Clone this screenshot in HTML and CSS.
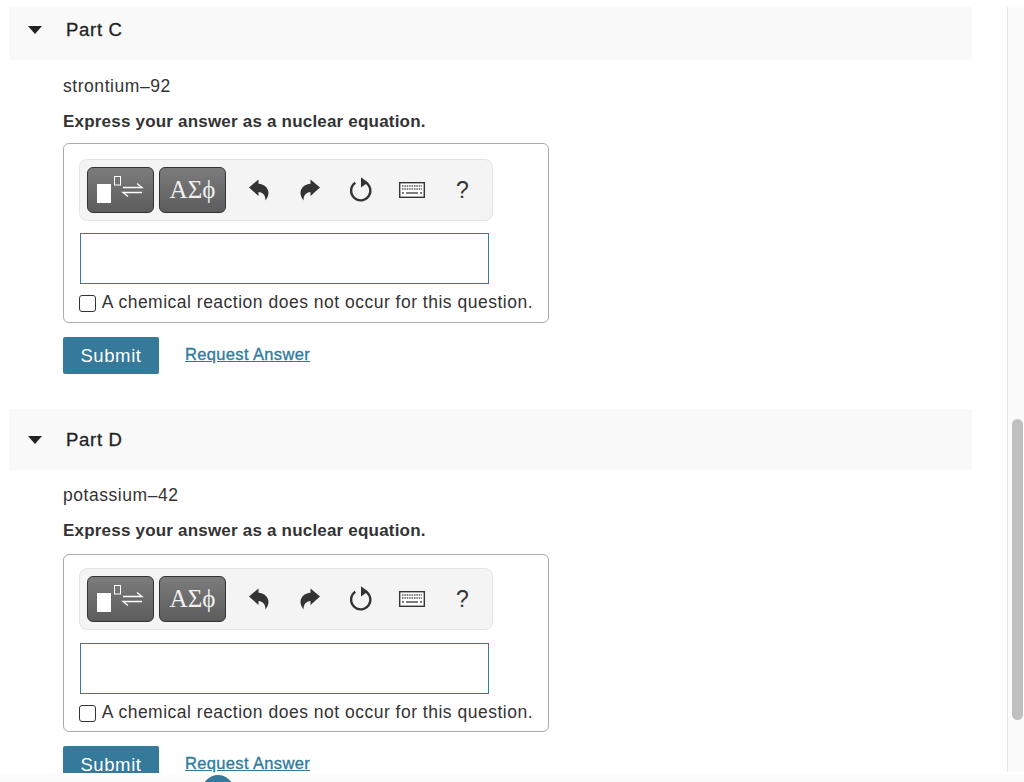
FILE: index.html
```html
<!DOCTYPE html>
<html lang="en">
<head>
<meta charset="utf-8">
<title>Nuclear equations</title>
<link rel="stylesheet" href="styles.css">
</head>
<body>
<div class="window">
  <main class="viewport">
    <div class="scroller">
      <section class="part">
        <header class="part-head"><span class="caret"></span><h2 class="part-title">Part C</h2></header>
        <div class="part-body">
          <p class="isotope">strontium&#8211;92</p>
          <p class="prompt">Express your answer as a nuclear equation.</p>
          <div class="answer">
            <div class="toolbar">
              <button class="tool tool-template" type="button" aria-label="Templates">
                <svg class="tool-svg" width="67" height="46" viewBox="0 0 67 46"><rect x="10" y="17" width="14" height="19" fill="#fff"/><rect x="27.500" y="9.500" width="6" height="8.500" fill="none" stroke="#fff"/><path d="M36 20.500h19l-5-4M55 25.500H36l5 4" fill="none" stroke="#fff" stroke-width="1.300"/></svg>
              </button>
              <button class="tool tool-greek" type="button">ΑΣϕ</button>
              <span class="icon-btn icon-first"><svg width="20" height="22" viewBox="0 0 20 22"><path d="M0 8.500 9.500 .5v4.300C15.500 5 19.500 9.500 19.500 14 19.500 16.500 18 19.500 16.500 21.500 16.500 16 14 13.500 9.500 13V17z" fill="#333"/></svg></span>
              <span class="icon-btn"><svg width="20" height="22" viewBox="0 0 20 22"><path d="M20 8.500 10.500 .5v4.300C4.500 5 .5 9.500 .5 14 .5 16.500 2 19.500 3.500 21.500 3.500 16 6 13.500 10.500 13V17z" fill="#333"/></svg></span>
              <span class="icon-btn"><svg width="24" height="26" viewBox="0 0 24 26"><path d="M13 4.200A9.600 9.600 0 1 1 6.300 5.800" fill="none" stroke="#333" stroke-width="2.400"/><path d="M12 .3 19 5.500 12 10.500z" fill="#333"/></svg></span>
              <span class="icon-btn"><svg width="26" height="16" viewBox="0 0 26 16"><rect x=".7" y=".7" width="24.600" height="14.600" fill="#fff" stroke="#333" stroke-width="1.400"/><path d="M3 4h20M3 7h20" stroke="#555" stroke-width="1.500" stroke-dasharray="1.500 .9"/><path d="M3 11h2M7 11h12M21 11h2" stroke="#555" stroke-width="1.500"/></svg></span>
              <span class="icon-btn help">?</span>
            </div>
            <div class="field"></div>
            <label class="no-reaction"><input class="check" type="checkbox">A chemical reaction does not occur for this question.</label>
          </div>
          <div class="actions"><button class="submit" type="button">Submit</button><a class="request" href="#">Request Answer</a></div>
        </div>
      </section>
      <section class="part part-next">
        <header class="part-head"><span class="caret"></span><h2 class="part-title">Part D</h2></header>
        <div class="part-body">
          <p class="isotope">potassium&#8211;42</p>
          <p class="prompt">Express your answer as a nuclear equation.</p>
          <div class="answer">
            <div class="toolbar">
              <button class="tool tool-template" type="button" aria-label="Templates">
                <svg class="tool-svg" width="67" height="46" viewBox="0 0 67 46"><rect x="10" y="17" width="14" height="19" fill="#fff"/><rect x="27.500" y="9.500" width="6" height="8.500" fill="none" stroke="#fff"/><path d="M36 20.500h19l-5-4M55 25.500H36l5 4" fill="none" stroke="#fff" stroke-width="1.300"/></svg>
              </button>
              <button class="tool tool-greek" type="button">ΑΣϕ</button>
              <span class="icon-btn icon-first"><svg width="20" height="22" viewBox="0 0 20 22"><path d="M0 8.500 9.500 .5v4.300C15.500 5 19.500 9.500 19.500 14 19.500 16.500 18 19.500 16.500 21.500 16.500 16 14 13.500 9.500 13V17z" fill="#333"/></svg></span>
              <span class="icon-btn"><svg width="20" height="22" viewBox="0 0 20 22"><path d="M20 8.500 10.500 .5v4.300C4.500 5 .5 9.500 .5 14 .5 16.500 2 19.500 3.500 21.500 3.500 16 6 13.500 10.500 13V17z" fill="#333"/></svg></span>
              <span class="icon-btn"><svg width="24" height="26" viewBox="0 0 24 26"><path d="M13 4.200A9.600 9.600 0 1 1 6.300 5.800" fill="none" stroke="#333" stroke-width="2.400"/><path d="M12 .3 19 5.500 12 10.500z" fill="#333"/></svg></span>
              <span class="icon-btn"><svg width="26" height="16" viewBox="0 0 26 16"><rect x=".7" y=".7" width="24.600" height="14.600" fill="#fff" stroke="#333" stroke-width="1.400"/><path d="M3 4h20M3 7h20" stroke="#555" stroke-width="1.500" stroke-dasharray="1.500 .9"/><path d="M3 11h2M7 11h12M21 11h2" stroke="#555" stroke-width="1.500"/></svg></span>
              <span class="icon-btn help">?</span>
            </div>
            <div class="field"></div>
            <label class="no-reaction"><input class="check" type="checkbox">A chemical reaction does not occur for this question.</label>
          </div>
          <div class="actions"><button class="submit" type="button">Submit</button><a class="request" href="#">Request Answer</a></div>
        </div>
      </section>
    </div>
  </main>
  <aside class="scrollbar"><div class="thumb"></div></aside>
  <div class="fade"><span class="fab"></span></div>
</div>
</body>
</html>
```
FILE: styles.css
```css
* { box-sizing: border-box; }
html, body { margin: 0; height: 100%; overflow: hidden; background: #fff; }
body { font-family: "Liberation Sans", Arial, sans-serif; color: #333; }
.window { position: relative; width: 1024px; height: 782px; display: flex; padding-top: 7px; overflow: hidden; }
.viewport { width: 1007px; height: 766px; overflow: hidden; }
.scroller { margin-top: -8px; padding-left: 9px; }
.part { width: 963px; padding-bottom: 35px; }
.part-head { height: 61px; background: #f9f9f9; display: flex; align-items: center; }
.caret { width: 0; height: 0; margin-left: 19px; border-left: 7.500px solid transparent; border-right: 7.500px solid transparent; border-top: 8px solid #222; }
.part-title { margin: 0 0 0 24px; font-size: 18.500px; font-weight: 400; line-height: 24px; letter-spacing: .7px; color: #222; -webkit-text-stroke: .3px #222; }
.part-body { padding: 16px 0 0 54px; }
.isotope { margin: 0; font-size: 17.500px; line-height: 20px; letter-spacing: .55px; color: #333; }
.prompt { margin: 16px 0 0; font-size: 17px; font-weight: 700; line-height: 20px; letter-spacing: .2px; color: #333; }
.answer { width: 486px; height: 180px; margin-top: 11px; padding: 15px 15px 0; border: 1px solid #aaa; border-radius: 6px; background: #fff; }
.toolbar { width: 414px; height: 62px; display: flex; align-items: center; padding-left: 7px; background: #f4f4f4; border: 1px solid #e4e4e4; border-radius: 8px; }
.tool { height: 46px; padding: 0; border: 1px solid #333; border-radius: 6px; background: linear-gradient(#7c7c7c, #5c5c5c); color: #f0f0f0; display: flex; align-items: center; justify-content: center; }
.tool-template { width: 67px; }
.tool-svg { display: block; flex: none; }
.tool-greek { width: 67px; margin-left: 5px; font-family: "Liberation Serif", "DejaVu Serif", serif; font-size: 25px; }
.icon-btn { width: 51px; height: 44px; display: flex; align-items: center; justify-content: center; color: #333; }
.icon-first { margin-left: 7px; }
.help { font-size: 23px; }
.field { width: 409px; height: 51px; margin: 12px 0 0 1px; border: 1px solid #347a9c; background: #fff; }
.no-reaction { display: flex; align-items: center; margin-top: 8px; font-size: 17.500px; line-height: 20px; letter-spacing: .5px; color: #333; white-space: nowrap; }
.check { appearance: none; width: 17px; height: 17px; margin: 2px 6px 0 0; border: 1px solid #333; border-radius: 3px; background: #fff; }
.actions { display: flex; align-items: center; margin-top: 14px; }
.submit { width: 96px; height: 37px; padding: 0; border: 0; border-radius: 2px; background: #35799b; color: #fff; font-family: inherit; font-size: 18.500px; letter-spacing: .6px; }
.request { margin: 0 0 2px 26px; color: #2f7b9e; font-size: 16.500px; font-weight: 400; letter-spacing: .35px; -webkit-text-stroke: .35px #2f7b9e; text-decoration: underline; }
.part-next .part-body { padding-top: 15px; }
.part-next .answer { height: 178px; margin-top: 13px; padding-top: 13px; }
.part-next .field { margin-top: 13px; }
.scrollbar { position: relative; width: 17px; height: 765px; background: #fbfbfb; border-left: 1px solid #e6e6e6; }
.thumb { width: 11px; height: 301px; margin: 412px 0 0 4px; border-radius: 6px; background: #bfbfbf; }
.fade { position: absolute; left: 0; right: 0; bottom: 0; height: 9px; background: linear-gradient(#fefefe, #f8f8f8); }
.fab { position: absolute; left: 202px; top: 2px; width: 32px; height: 32px; border-radius: 50%; background: #35799b; }
```
